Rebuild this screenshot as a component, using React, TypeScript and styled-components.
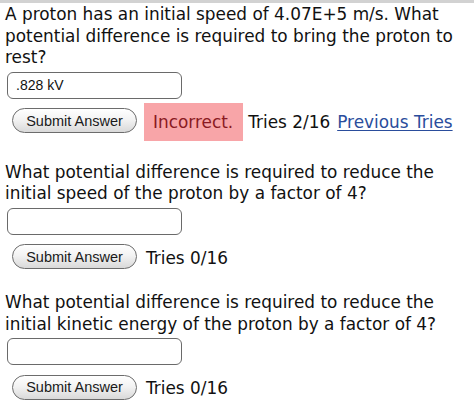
import React from "react";
import styled, { createGlobalStyle } from "styled-components";

const Global = createGlobalStyle`
  html, body { margin: 0; padding: 0; background: #ffffff; }
  body { width: 474px; height: 417px; overflow: hidden; }
`;

const Page = styled.div`
  border-top: 3px solid #d2d2d2;
  padding: 1px 0 0 5px;
  font-family: "DejaVu Sans", Verdana, sans-serif;
  font-size: 16.9px;
  color: #111;
`;

const Section = styled.section<{ $gapTop: number }>`
  margin-top: ${(p) => p.$gapTop}px;
`;

const Question = styled.p`
  margin: 0;
  line-height: 21.6px;
`;

const AnswerInput = styled.div`
  box-sizing: border-box;
  margin: 3px 0 0 2px;
  width: 175px;
  height: 27px;
  border: 1.5px solid #6a6a6a;
  border-radius: 6px;
  background: #fff;
  padding-left: 8px;
  display: flex;
  align-items: center;
  font-family: "Liberation Sans", Arial, sans-serif;
  font-size: 14px;
  color: #111;
`;

const Row = styled.div`
  margin-top: 4px;
  height: 38px;
  display: flex;
  align-items: center;
`;

const SubmitButton = styled.button`
  box-sizing: border-box;
  margin: -2px 0 0 7px;
  width: 125px;
  height: 25px;
  border: 1px solid #6c6c6c;
  border-radius: 13px;
  background: linear-gradient(#ffffff 0%, #f3f3f3 45%, #d9d9d9 100%);
  font-family: "Liberation Sans", Arial, sans-serif;
  font-size: 14.5px;
  color: #1a1a1a;
  padding: 0;
  cursor: pointer;
`;

const Status = styled.span`
  align-self: stretch;
  margin-left: 7px;
  background: #f8a5a8;
  color: #8a1a22;
  display: flex;
  align-items: center;
  padding: 0 10px 0 9px;
`;

const Tries = styled.span<{ $gap: number }>`
  margin-left: ${(p) => p.$gap}px;
  white-space: pre;
`;

const Link = styled.a`
  margin-left: 7px;
  color: #2a4d9c;
  text-decoration: underline;
  text-underline-offset: 2px;
`;

type Q = {
  text: string;
  value: string;
  tries: string;
  incorrect?: boolean;
  gapTop: number;
};

const questions: Q[] = [
  {
    text: "A proton has an initial speed of 4.07E+5 m/s. What potential difference is required to bring the proton to rest?",
    value: ".828 kV",
    tries: "Tries 2/16",
    incorrect: true,
    gapTop: 0,
  },
  {
    text: "What potential difference is required to reduce the initial speed of the proton by a factor of 4?",
    value: "",
    tries: "Tries 0/16",
    gapTop: 21,
  },
  {
    text: "What potential difference is required to reduce the initial kinetic energy of the proton by a factor of 4?",
    value: "",
    tries: "Tries 0/16",
    gapTop: 15,
  },
];

export default function App() {
  return (
    <>
      <Global />
      <Page>
        {questions.map((q, i) => (
          <Section key={i} $gapTop={q.gapTop}>
            <Question>{q.text}</Question>
            <AnswerInput>{q.value}</AnswerInput>
            <Row>
              <SubmitButton>Submit Answer</SubmitButton>
              {q.incorrect && <Status>Incorrect.</Status>}
              <Tries $gap={q.incorrect ? 5 : 9}>{q.tries}</Tries>
              {q.incorrect && <Link href="#">Previous Tries</Link>}
            </Row>
          </Section>
        ))}
      </Page>
    </>
  );
}
